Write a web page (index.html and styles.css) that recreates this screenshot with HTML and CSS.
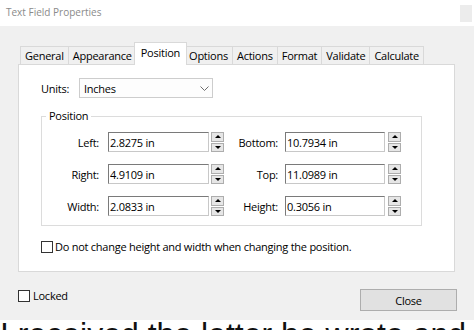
FILE: index.html
```html
<!DOCTYPE html>
<html lang="en">
<head>
    <meta charset="UTF-8">
    <title>Text Field Properties</title>
    <link rel="stylesheet" href="styles.css">
</head>
<body>
    <div class="titlebar">
        <span class="title">Text Field Properties</span>
        <span class="winbtn"></span>
    </div>

    <div class="dialog">
        <div class="tabs">
            <div class="tab">General</div>
            <div class="tab">Appearance</div>
            <div class="tab active">Position</div>
            <div class="tab">Options</div>
            <div class="tab">Actions</div>
            <div class="tab">Format</div>
            <div class="tab">Validate</div>
            <div class="tab">Calculate</div>
        </div>

        <div class="panel">
            <div class="units-row">
                <span class="units-label">Units:</span>
                <div class="select">
                    <span>Inches</span>
                    <svg width="9" height="5" viewBox="0 0 9 5"><polyline points="0.5,0.5 4.5,4.5 8.5,0.5" fill="none" stroke="#6d6d6d" stroke-width="1"/></svg>
                </div>
            </div>

            <fieldset class="group">
                <legend>Position</legend>

                <div class="row">
                    <div class="field first">
                        <label>Left:</label>
                        <input class="num" type="text" value="2.8275 in">
                        <div class="spin"><span class="up"></span><span class="down"></span></div>
                    </div>
                    <div class="field second">
                        <label>Bottom:</label>
                        <input class="num" type="text" value="10.7934 in">
                        <div class="spin"><span class="up"></span><span class="down"></span></div>
                    </div>
                </div>

                <div class="row">
                    <div class="field first">
                        <label>Right:</label>
                        <input class="num" type="text" value="4.9109 in">
                        <div class="spin"><span class="up"></span><span class="down"></span></div>
                    </div>
                    <div class="field second">
                        <label>Top:</label>
                        <input class="num" type="text" value="11.0989 in">
                        <div class="spin"><span class="up"></span><span class="down"></span></div>
                    </div>
                </div>

                <div class="row">
                    <div class="field first">
                        <label>Width:</label>
                        <input class="num" type="text" value="2.0833 in">
                        <div class="spin"><span class="up"></span><span class="down"></span></div>
                    </div>
                    <div class="field second">
                        <label>Height:</label>
                        <input class="num" type="text" value="0.3056 in">
                        <div class="spin"><span class="up"></span><span class="down"></span></div>
                    </div>
                </div>
            </fieldset>

            <label class="check keep-size"><span class="box"></span>Do not change height and width when changing the position.</label>
        </div>

        <div class="footer">
            <label class="check"><span class="box"></span>Locked</label>
            <button class="close">Close</button>
        </div>
    </div>

    <div class="strip">
        <div class="strip-text">I received the letter he wrote and I will send it back to you in full</div>
    </div>
</body>
</html>
```

FILE: styles.css
```css
body {
    margin: 0;
    width: 474px;
    height: 330px;
    overflow: hidden;
    background-color: #fff;
    font-family: "Open Sans", Arial, sans-serif;
    font-size: 11px;
    letter-spacing: -0.25px;
    color: #000;
}

/* Window title */
.titlebar {
    height: 26px;
    display: flex;
    justify-content: space-between;
    align-items: flex-start;
    background-color: #fff;
}
.title {
    margin: 4px 0 0 6px;
    font-size: 10px;
    letter-spacing: 0;
    line-height: 16px;
    color: #8a8a8a;
}
.winbtn {
    width: 12px;
    height: 17px;
    margin: 5px 2px 0 0;
    background-color: #ececec;
}

/* Dialog body */
.dialog {
    height: 294px;
    box-sizing: border-box;
    padding: 16px 19px 0 18px;
    background-color: #f0f0f0;
}
.tabs {
    display: flex;
    align-items: flex-end;
    height: 22px;
    padding-left: 3px;
}
.tab {
    height: 18px;
    box-sizing: border-box;
    padding: 0 4px;
    margin-left: -1px;
    line-height: 17px;
    border: 1px solid #d9d9d9;
    border-bottom: none;
    background-color: #f0f0f0;
}
.tab.active {
    position: relative;
    z-index: 1;
    height: 23px;
    margin: 0 -2px -1px -3px;
    padding: 0 6px;
    line-height: 19px;
    background-color: #fff;
}

.panel {
    height: 208px;
    box-sizing: border-box;
    padding: 13px 0 0 22px;
    border: 1px solid #d9d9d9;
    background-color: #fff;
}
.units-row {
    display: flex;
    align-items: center;
}
.units-label {
    width: 38px;
}
.select {
    width: 134px;
    height: 20px;
    box-sizing: border-box;
    display: flex;
    align-items: center;
    justify-content: space-between;
    padding: 0 3px 0 4px;
    border: 1px solid #cdcdcd;
    background-color: #fdfdfd;
}

/* Position group */
.group {
    width: 381px;
    box-sizing: border-box;
    margin: 10px 0 0 0;
    padding: 8px 0 9px 0;
    border: 1px solid #dcdcdc;
    min-inline-size: 0;
}
.group legend {
    margin-left: 4px;
    padding: 0 3px;
    line-height: 16px;
}
.row {
    display: flex;
}
.row + .row {
    margin-top: 12px;
}
.field {
    display: flex;
    align-items: center;
}
.field label {
    text-align: right;
}
.field.first label {
    width: 57px;
    margin-right: 9px;
}
.field.second label {
    width: 54px;
    margin-right: 7px;
}
.num {
    width: 101px;
    height: 20px;
    box-sizing: border-box;
    margin: 0;
    padding: 0 1px;
    font: inherit;
    letter-spacing: inherit;
    color: #000;
    border: 1px solid #c8c8c8;
    border-top-color: #7a7a7a;
    border-left-color: #7a7a7a;
    outline: none;
}
.field.second .num {
    width: 100px;
}
.spin {
    width: 13px;
    height: 20px;
    margin-left: 2px;
    display: flex;
    flex-direction: column;
    gap: 1px;
}
.field.second .spin {
    margin-left: 3px;
}
.spin span {
    flex: 1;
    display: flex;
    align-items: center;
    justify-content: center;
    border: 1px solid #adadad;
    background-color: #e6e6e6;
}
.spin .up::after {
    content: "";
    border-left: 3px solid transparent;
    border-right: 3px solid transparent;
    border-bottom: 3px solid #000;
}
.spin .down::after {
    content: "";
    border-left: 3px solid transparent;
    border-right: 3px solid transparent;
    border-top: 3px solid #000;
}

/* Checkboxes */
.check {
    display: flex;
    align-items: center;
    line-height: 14px;
}
.check .box {
    width: 12px;
    height: 12px;
    box-sizing: border-box;
    margin-right: 2px;
    border: 1px solid #333;
    background-color: #fff;
}
.keep-size {
    margin-top: 14px;
}

.footer {
    display: flex;
    justify-content: space-between;
    align-items: flex-start;
    margin-top: 17px;
}
.footer .check .box {
    margin-right: 3px;
}
.close {
    width: 97px;
    height: 22px;
    margin: 0 -2px 0 0;
    padding: 0;
    font: inherit;
    letter-spacing: inherit;
    color: #000;
    border: 1px solid #adadad;
    background-color: #e1e1e1;
}

/* Cut-off line of the page behind the dialog */
.strip {
    height: 10px;
    overflow: hidden;
    background-color: #fff;
}
.strip-text {
    margin-top: -2px;
    font-family: "Liberation Sans", Arial, sans-serif;
    font-size: 32px;
    line-height: 32px;
    letter-spacing: 0;
    white-space: nowrap;
    color: #111;
}
```
